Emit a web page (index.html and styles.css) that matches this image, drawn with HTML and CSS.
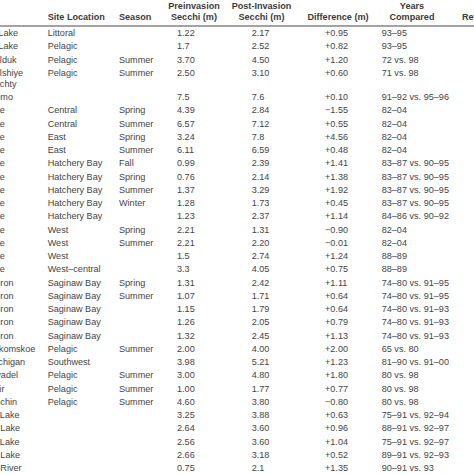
FILE: index.html
```html
<!DOCTYPE html>
<html lang="en">
<head>
<meta charset="utf-8">
<title>Secchi depth table</title>
<link rel="stylesheet" href="styles.css">
</head>
<body>
<table class="data">
  <colgroup>
    <col class="c-lake"><col class="c-site"><col class="c-season"><col class="c-pre"><col class="c-post"><col class="c-diff"><col class="c-years"><col class="c-ref">
  </colgroup>
  <thead>
    <tr>
      <th class="lake"></th>
      <th class="site">Site Location</th>
      <th class="season">Season</th>
      <th class="ctr">Preinvasion<br>Secchi (m)</th>
      <th class="ctr">Post-Invasion<br>Secchi (m)</th>
      <th class="ctr">Difference (m)</th>
      <th class="ctr">Years<br>Compared</th>
      <th class="ref">Reference</th>
    </tr>
  </thead>
  <tbody>
    <tr><td class="lake">Oneida Lake</td><td class="site">Littoral</td><td class="season"></td><td class="pre">1.22</td><td class="post">2.17</td><td class="diff">+0.95</td><td class="years">93–95</td><td class="ref"></td></tr>
    <tr><td class="lake">Oneida Lake</td><td class="site">Pelagic</td><td class="season"></td><td class="pre">1.7</td><td class="post">2.52</td><td class="diff">+0.82</td><td class="years">93–95</td><td class="ref"></td></tr>
    <tr><td class="lake">Lake Bolduk</td><td class="site">Pelagic</td><td class="season">Summer</td><td class="pre">3.70</td><td class="post">4.50</td><td class="diff">+1.20</td><td class="years">72 vs. 98</td><td class="ref"></td></tr>
    <tr><td class="lake">Lake Bolshiye<br>Lake Kuchty</td><td class="site">Pelagic</td><td class="season">Summer</td><td class="pre">2.50</td><td class="post">3.10</td><td class="diff">+0.60</td><td class="years">71 vs. 98</td><td class="ref"></td></tr>
    <tr><td class="lake">Lake Como</td><td class="site"></td><td class="season"></td><td class="pre">7.5</td><td class="post">7.6</td><td class="diff">+0.10</td><td class="years">91–92 vs. 95–96</td><td class="ref"></td></tr>
    <tr><td class="lake">Lake Erie</td><td class="site">Central</td><td class="season">Spring</td><td class="pre">4.39</td><td class="post">2.84</td><td class="diff">−1.55</td><td class="years">82–04</td><td class="ref"></td></tr>
    <tr><td class="lake">Lake Erie</td><td class="site">Central</td><td class="season">Summer</td><td class="pre">6.57</td><td class="post">7.12</td><td class="diff">+0.55</td><td class="years">82–04</td><td class="ref"></td></tr>
    <tr><td class="lake">Lake Erie</td><td class="site">East</td><td class="season">Spring</td><td class="pre">3.24</td><td class="post">7.8</td><td class="diff">+4.56</td><td class="years">82–04</td><td class="ref"></td></tr>
    <tr><td class="lake">Lake Erie</td><td class="site">East</td><td class="season">Summer</td><td class="pre">6.11</td><td class="post">6.59</td><td class="diff">+0.48</td><td class="years">82–04</td><td class="ref"></td></tr>
    <tr><td class="lake">Lake Erie</td><td class="site">Hatchery Bay</td><td class="season">Fall</td><td class="pre">0.99</td><td class="post">2.39</td><td class="diff">+1.41</td><td class="years">83–87 vs. 90–95</td><td class="ref"></td></tr>
    <tr><td class="lake">Lake Erie</td><td class="site">Hatchery Bay</td><td class="season">Spring</td><td class="pre">0.76</td><td class="post">2.14</td><td class="diff">+1.38</td><td class="years">83–87 vs. 90–95</td><td class="ref"></td></tr>
    <tr><td class="lake">Lake Erie</td><td class="site">Hatchery Bay</td><td class="season">Summer</td><td class="pre">1.37</td><td class="post">3.29</td><td class="diff">+1.92</td><td class="years">83–87 vs. 90–95</td><td class="ref"></td></tr>
    <tr><td class="lake">Lake Erie</td><td class="site">Hatchery Bay</td><td class="season">Winter</td><td class="pre">1.28</td><td class="post">1.73</td><td class="diff">+0.45</td><td class="years">83–87 vs. 90–95</td><td class="ref"></td></tr>
    <tr><td class="lake">Lake Erie</td><td class="site">Hatchery Bay</td><td class="season"></td><td class="pre">1.23</td><td class="post">2.37</td><td class="diff">+1.14</td><td class="years">84–86 vs. 90–92</td><td class="ref"></td></tr>
    <tr><td class="lake">Lake Erie</td><td class="site">West</td><td class="season">Spring</td><td class="pre">2.21</td><td class="post">1.31</td><td class="diff">−0.90</td><td class="years">82–04</td><td class="ref"></td></tr>
    <tr><td class="lake">Lake Erie</td><td class="site">West</td><td class="season">Summer</td><td class="pre">2.21</td><td class="post">2.20</td><td class="diff">−0.01</td><td class="years">82–04</td><td class="ref"></td></tr>
    <tr><td class="lake">Lake Erie</td><td class="site">West</td><td class="season"></td><td class="pre">1.5</td><td class="post">2.74</td><td class="diff">+1.24</td><td class="years">88–89</td><td class="ref"></td></tr>
    <tr><td class="lake">Lake Erie</td><td class="site">West–central</td><td class="season"></td><td class="pre">3.3</td><td class="post">4.05</td><td class="diff">+0.75</td><td class="years">88–89</td><td class="ref"></td></tr>
    <tr><td class="lake">Lake Huron</td><td class="site">Saginaw Bay</td><td class="season">Spring</td><td class="pre">1.31</td><td class="post">2.42</td><td class="diff">+1.11</td><td class="years">74–80 vs. 91–95</td><td class="ref"></td></tr>
    <tr><td class="lake">Lake Huron</td><td class="site">Saginaw Bay</td><td class="season">Summer</td><td class="pre">1.07</td><td class="post">1.71</td><td class="diff">+0.64</td><td class="years">74–80 vs. 91–95</td><td class="ref"></td></tr>
    <tr><td class="lake">Lake Huron</td><td class="site">Saginaw Bay</td><td class="season"></td><td class="pre">1.15</td><td class="post">1.79</td><td class="diff">+0.64</td><td class="years">74–80 vs. 91–93</td><td class="ref"></td></tr>
    <tr><td class="lake">Lake Huron</td><td class="site">Saginaw Bay</td><td class="season"></td><td class="pre">1.26</td><td class="post">2.05</td><td class="diff">+0.79</td><td class="years">74–80 vs. 91–93</td><td class="ref"></td></tr>
    <tr><td class="lake">Lake Huron</td><td class="site">Saginaw Bay</td><td class="season"></td><td class="pre">1.32</td><td class="post">2.45</td><td class="diff">+1.13</td><td class="years">74–80 vs. 91–93</td><td class="ref"></td></tr>
    <tr><td class="lake">Lake Lukomskoe</td><td class="site">Pelagic</td><td class="season">Summer</td><td class="pre">2.00</td><td class="post">4.00</td><td class="diff">+2.00</td><td class="years">65 vs. 80</td><td class="ref"></td></tr>
    <tr><td class="lake">Lake Michigan</td><td class="site">Southwest</td><td class="season"></td><td class="pre">3.98</td><td class="post">5.21</td><td class="diff">+1.23</td><td class="years">81–90 vs. 91–00</td><td class="ref"></td></tr>
    <tr><td class="lake">Lake Myadel</td><td class="site">Pelagic</td><td class="season">Summer</td><td class="pre">3.00</td><td class="post">4.80</td><td class="diff">+1.80</td><td class="years">80 vs. 98</td><td class="ref"></td></tr>
    <tr><td class="lake">Lake Svir</td><td class="site">Pelagic</td><td class="season">Summer</td><td class="pre">1.00</td><td class="post">1.77</td><td class="diff">+0.77</td><td class="years">80 vs. 98</td><td class="ref"></td></tr>
    <tr><td class="lake">Lake Rechin</td><td class="site">Pelagic</td><td class="season">Summer</td><td class="pre">4.60</td><td class="post">3.80</td><td class="diff">−0.80</td><td class="years">80 vs. 98</td><td class="ref"></td></tr>
    <tr><td class="lake">Seneca Lake</td><td class="site"></td><td class="season"></td><td class="pre">3.25</td><td class="post">3.88</td><td class="diff">+0.63</td><td class="years">75–91 vs. 92–94</td><td class="ref"></td></tr>
    <tr><td class="lake">Cayuga Lake</td><td class="site"></td><td class="season"></td><td class="pre">2.64</td><td class="post">3.60</td><td class="diff">+0.96</td><td class="years">88–91 vs. 92–97</td><td class="ref"></td></tr>
    <tr><td class="lake">Seneca Lake</td><td class="site"></td><td class="season"></td><td class="pre">2.56</td><td class="post">3.60</td><td class="diff">+1.04</td><td class="years">75–91 vs. 92–97</td><td class="ref"></td></tr>
    <tr><td class="lake">Cayuga Lake</td><td class="site"></td><td class="season"></td><td class="pre">2.66</td><td class="post">3.18</td><td class="diff">+0.52</td><td class="years">89–91 vs. 92–93</td><td class="ref"></td></tr>
    <tr><td class="lake">Hudson River</td><td class="site"></td><td class="season"></td><td class="pre">0.75</td><td class="post">2.1</td><td class="diff">+1.35</td><td class="years">90–91 vs. 93</td><td class="ref"></td></tr>
  </tbody>
</table>
</body>
</html>
```

FILE: styles.css
```css
html, body {
  margin: 0;
  padding: 0;
  background: #ffffff;
  overflow: hidden;
}

body {
  font-family: "Liberation Sans", Arial, Helvetica, sans-serif;
  font-size: 9.1px;
  color: #444444;
}

.data {
  border-collapse: collapse;
  table-layout: fixed;
  width: 561.5px;
  margin-left: -33.5px;
}

.c-lake { width: 77.5px; }
.c-site { width: 72px; }
.c-season { width: 49px; }
.c-pre { width: 58px; }
.c-post { width: 77px; }
.c-diff { width: 76px; }
.c-years { width: 72px; }
.c-ref { width: 80px; }

.data thead tr {
  border-bottom: 2px solid #a3a3a3;
}

.data th {
  font-weight: bold;
  color: #3a3a3a;
  line-height: 10.5px;
  padding: 1px 0 3px 0;
  vertical-align: bottom;
  white-space: nowrap;
  text-align: left;
}

.data th.ctr { text-align: center; }

.data td {
  line-height: 11px;
  padding: 1.125px 0;
  vertical-align: top;
  white-space: nowrap;
  text-align: left;
}

.data .lake { padding-left: 0; }
.data .site { padding-left: 3.7px; }
.data .season { padding-left: 3px; }
.data td.pre { padding-left: 12px; }
.data td.post { padding-left: 28.7px; }
.data td.diff { padding-left: 25px; }
.data td.years { padding-left: 5.7px; }
.data .ref { padding-left: 14px; }
```
